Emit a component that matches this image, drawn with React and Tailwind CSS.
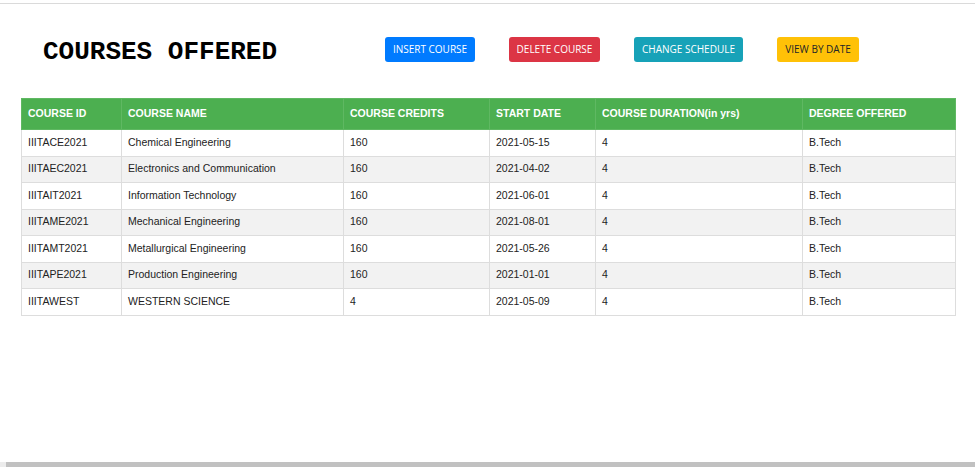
const rows = [
  ["IIITACE2021", "Chemical Engineering", "160", "2021-05-15", "4", "B.Tech"],
  ["IIITAEC2021", "Electronics and Communication", "160", "2021-04-02", "4", "B.Tech"],
  ["IIITAIT2021", "Information Technology", "160", "2021-06-01", "4", "B.Tech"],
  ["IIITAME2021", "Mechanical Engineering", "160", "2021-08-01", "4", "B.Tech"],
  ["IIITAMT2021", "Metallurgical Engineering", "160", "2021-05-26", "4", "B.Tech"],
  ["IIITAPE2021", "Production Engineering", "160", "2021-01-01", "4", "B.Tech"],
  ["IIITAWEST", "WESTERN SCIENCE", "4", "2021-05-09", "4", "B.Tech"],
];

const headers = [
  "COURSE ID",
  "COURSE NAME",
  "COURSE CREDITS",
  "START DATE",
  "COURSE DURATION(in yrs)",
  "DEGREE OFFERED",
];

const colWidths = ["w-[100px]", "w-[222px]", "w-[146px]", "w-[106px]", "w-[207px]", "w-[153px]"];

function ActionButton({ label, className }) {
  return (
    <button
      className={`h-[25px] rounded-[3px] text-[10px] font-['Open_Sans',sans-serif] leading-none ${className}`}
    >
      {label}
    </button>
  );
}

export default function App() {
  return (
    <div className="h-[467px] flex flex-col bg-white overflow-hidden font-['Liberation_Sans',Arial,sans-serif]">
      <div className="h-[4px] border-b border-[#dadada]" />

      <div className="flex-1">
        <div className="flex items-center h-[94px] pb-[4px]">
          <h1 className="ml-[43px] mt-[6px] w-[342px] text-[26px] font-bold text-black font-['Courier_New','Liberation_Mono',monospace] leading-none">
            COURSES OFFERED
          </h1>
          <div className="flex items-center">
            <ActionButton label="INSERT COURSE" className="w-[90px] bg-[#007bff] text-white" />
            <ActionButton label="DELETE COURSE" className="ml-[34px] w-[91px] bg-[#dc3545] text-white" />
            <ActionButton label="CHANGE SCHEDULE" className="ml-[34px] w-[109px] bg-[#17a2b8] text-white" />
            <ActionButton label="VIEW BY DATE" className="ml-[34px] w-[82px] bg-[#ffc107] text-[#212529]" />
          </div>
        </div>

        <table className="ml-[21px] w-[934px] border-collapse table-fixed text-[10.5px]">
          <thead>
            <tr className="bg-[#4caf50] h-[31px]">
              {headers.map((h, i) => (
                <th
                  key={h}
                  className={`${colWidths[i]} border border-[#5fb862] px-[6px] text-left font-bold text-white`}
                >
                  {h}
                </th>
              ))}
            </tr>
          </thead>
          <tbody>
            {rows.map((r, ri) => (
              <tr key={r[0]} className={`h-[26.5px] ${ri % 2 === 1 ? "bg-[#f2f2f2]" : "bg-white"}`}>
                {r.map((c, ci) => (
                  <td key={ci} className="border border-[#dddddd] px-[6px] text-[#222]">
                    {c}
                  </td>
                ))}
              </tr>
            ))}
          </tbody>
        </table>
      </div>

      <div className="h-[5px] flex">
        <div className="w-[6px] bg-[#ececec]" />
        <div className="flex-1 bg-[#c1c1c1]" />
      </div>
    </div>
  );
}
